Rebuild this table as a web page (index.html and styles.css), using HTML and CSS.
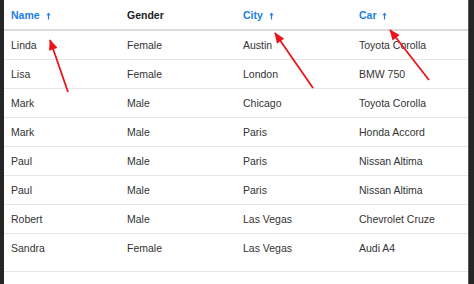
FILE: index.html
```html
<!DOCTYPE html>
<html>
<head>
<meta charset="utf-8">
<link rel="stylesheet" href="styles.css">
</head>
<body>
<div class="frame">
  <div class="panel">
    <table class="grid">
      <thead>
        <tr>
          <th class="sortable">Name <svg class="sort" viewBox="0 0 5 8" width="5" height="8"><path d="M2.5 0.5 L4.6 3.2 H3.1 V7.5 H1.9 V3.2 H0.4 Z" fill="#1a7fe5"/></svg></th>
          <th>Gender</th>
          <th class="sortable">City <svg class="sort" viewBox="0 0 5 8" width="5" height="8"><path d="M2.5 0.5 L4.6 3.2 H3.1 V7.5 H1.9 V3.2 H0.4 Z" fill="#1a7fe5"/></svg></th>
          <th class="sortable">Car <svg class="sort" viewBox="0 0 5 8" width="5" height="8"><path d="M2.5 0.5 L4.6 3.2 H3.1 V7.5 H1.9 V3.2 H0.4 Z" fill="#1a7fe5"/></svg></th>
        </tr>
      </thead>
      <tbody>
        <tr><td>Linda</td><td>Female</td><td>Austin</td><td>Toyota Corolla</td></tr>
        <tr><td>Lisa</td><td>Female</td><td>London</td><td>BMW 750</td></tr>
        <tr><td>Mark</td><td>Male</td><td>Chicago</td><td>Toyota Corolla</td></tr>
        <tr><td>Mark</td><td>Male</td><td>Paris</td><td>Honda Accord</td></tr>
        <tr><td>Paul</td><td>Male</td><td>Paris</td><td>Nissan Altima</td></tr>
        <tr><td>Paul</td><td>Male</td><td>Paris</td><td>Nissan Altima</td></tr>
        <tr><td>Robert</td><td>Male</td><td>Las Vegas</td><td>Chevrolet Cruze</td></tr>
        <tr class="last"><td>Sandra</td><td>Female</td><td>Las Vegas</td><td>Audi A4</td></tr>
      </tbody>
    </table>
  </div>
  <svg class="annotations" width="474" height="284" viewBox="0 0 474 284">
    <defs>
      <marker id="head" viewBox="0 0 12 10" refX="11" refY="5" markerWidth="6.5" markerHeight="5" orient="auto" markerUnits="strokeWidth">
        <path d="M0 0 L12 5 L0 10 Z" fill="#e8151b"/>
      </marker>
    </defs>
    <line x1="68" y1="92" x2="50" y2="40" stroke="#e8151b" stroke-width="1.8" marker-end="url(#head)"/>
    <line x1="313" y1="88" x2="275" y2="33" stroke="#e8151b" stroke-width="1.8" marker-end="url(#head)"/>
    <line x1="429" y1="80" x2="390" y2="30" stroke="#e8151b" stroke-width="1.8" marker-end="url(#head)"/>
  </svg>
</div>
</body>
</html>
```
FILE: styles.css
```css
html, body {
  margin: 0;
  padding: 0;
  background: #262626;
}
.frame {
  position: relative;
  width: 474px;
  height: 284px;
  overflow: hidden;
  display: flex;
}
.panel {
  margin-left: 4px;
  width: 464px;
  height: 284px;
  background: #ffffff;
  border-right: 1px solid #555;
}
.grid {
  width: 464px;
  border-collapse: collapse;
  table-layout: fixed;
  font-family: "Liberation Sans", Arial, sans-serif;
  font-size: 10.5px;
  line-height: 12px;
  color: #333333;
}
.grid th, .grid td {
  text-align: left;
  vertical-align: top;
  padding: 8px 0 0 7px;
  white-space: nowrap;
  box-sizing: border-box;
}
.grid th {
  height: 30px;
  padding-top: 9px;
  font-weight: bold;
  color: #222222;
  border-bottom: 2px solid #dcdcdc;
}
.grid th.sortable {
  color: #1a7fe5;
}
.grid td {
  height: 29px;
  border-bottom: 1px solid #e6e6e6;
}
.grid tr.last td {
  height: 38px;
}
.sort {
  vertical-align: -1px;
  margin-left: 3px;
}
.annotations {
  position: absolute;
  left: 0;
  top: 0;
  pointer-events: none;
}
```
